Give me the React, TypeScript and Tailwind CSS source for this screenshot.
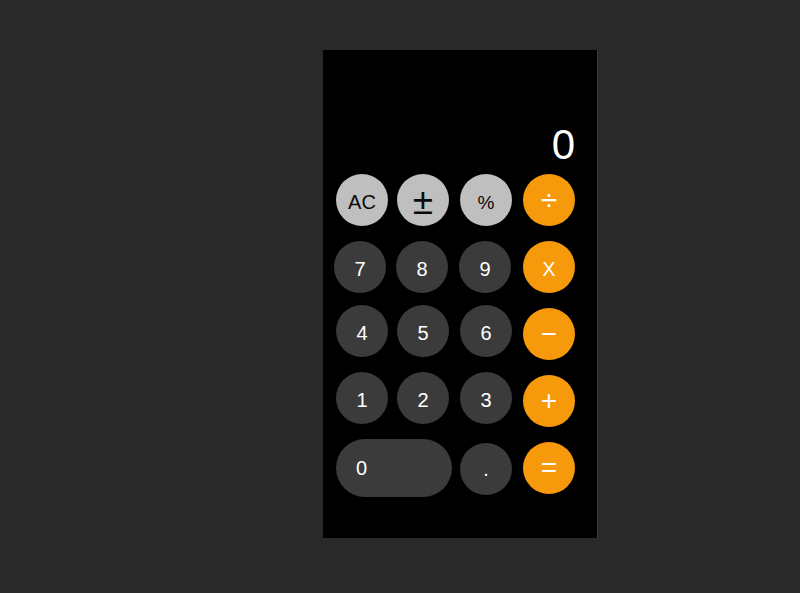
import React from 'react';

type Kind = 'fn' | 'num' | 'op';

interface Key {
  label: string;
  kind: Kind;
  cls?: string;
  text?: string;
}

const kindStyle: Record<Kind, string> = {
  fn: 'bg-[#bfbfbf] text-[#0a0a0a]',
  num: 'bg-[#3b3b3b] text-white',
  op: 'bg-[#f69a0b] text-white',
};

const rows: { cls: string; keys: Key[] }[] = [
  {
    cls: 'h-[52px] pl-[13px]',
    keys: [
      { label: 'AC', kind: 'fn' },
      { label: '±', kind: 'fn', cls: 'ml-[9px]', text: 'text-[37px] pt-[2px]' },
      { label: '%', kind: 'fn', cls: 'ml-[11px]', text: 'text-[19px] pt-[4px]' },
      { label: '÷', kind: 'op', cls: 'ml-[11px]', text: 'text-[30px]' },
    ],
  },
  {
    cls: 'h-[52px] pl-[11px] mt-[15px]',
    keys: [
      { label: '7', kind: 'num' },
      { label: '8', kind: 'num', cls: 'ml-[10px]' },
      { label: '9', kind: 'num', cls: 'ml-[11px]' },
      { label: 'X', kind: 'op', cls: 'ml-[12px]' },
    ],
  },
  {
    cls: 'h-[55px] pl-[13px] mt-[12px]',
    keys: [
      { label: '4', kind: 'num' },
      { label: '5', kind: 'num', cls: 'ml-[9px]' },
      { label: '6', kind: 'num', cls: 'ml-[11px]' },
      { label: '−', kind: 'op', cls: 'ml-[11px] mt-[3px]', text: 'text-[28px]' },
    ],
  },
  {
    cls: 'h-[55px] pl-[13px] mt-[12px]',
    keys: [
      { label: '1', kind: 'num' },
      { label: '2', kind: 'num', cls: 'ml-[9px]' },
      { label: '3', kind: 'num', cls: 'ml-[11px]' },
      { label: '+', kind: 'op', cls: 'ml-[11px] mt-[3px]', text: 'text-[28px]' },
    ],
  },
];

function CalcKey({ k }: { k: Key }) {
  return (
    <button
      className={`w-[52px] h-[52px] rounded-full flex items-center justify-center leading-none shrink-0 ${kindStyle[k.kind]} ${k.cls ?? ''} ${k.text ?? 'text-[20px] pt-[4px]'}`}
    >
      {k.label}
    </button>
  );
}

export default function App() {
  return (
    <div className="min-h-[593px] bg-[#292929] pt-[50px] pl-[323px]" style={{ fontFamily: '"Liberation Sans", Arial, sans-serif' }}>
      <div className="w-[275px] h-[488px] bg-black border-r border-[#3d3d3d] flex flex-col">
        {/* display */}
        <div className="h-[124px] flex items-end justify-end pr-[22px] pb-[8px]">
          <span className="text-white text-[42px] leading-none">0</span>
        </div>

        {rows.map((row, i) => (
          <div key={i} className={`flex items-start ${row.cls}`}>
            {row.keys.map((k) => (
              <CalcKey key={k.label} k={k} />
            ))}
          </div>
        ))}

        {/* bottom row */}
        <div className="flex items-start h-[58px] pl-[13px] mt-[12px]">
          <button className="w-[116px] h-[58px] rounded-full bg-[#3b3b3b] text-white text-[20px] leading-none flex items-center pl-[20px] shrink-0">
            0
          </button>
          <button className="w-[52px] h-[52px] rounded-full bg-[#3b3b3b] text-white text-[20px] leading-none flex items-center justify-center ml-[8px] mt-[4px] shrink-0">
            .
          </button>
          <button className="w-[52px] h-[52px] rounded-full bg-[#f69a0b] text-white text-[28px] leading-none flex items-center justify-center ml-[11px] mt-[3px] shrink-0">
            =
          </button>
        </div>
      </div>
    </div>
  );
}
